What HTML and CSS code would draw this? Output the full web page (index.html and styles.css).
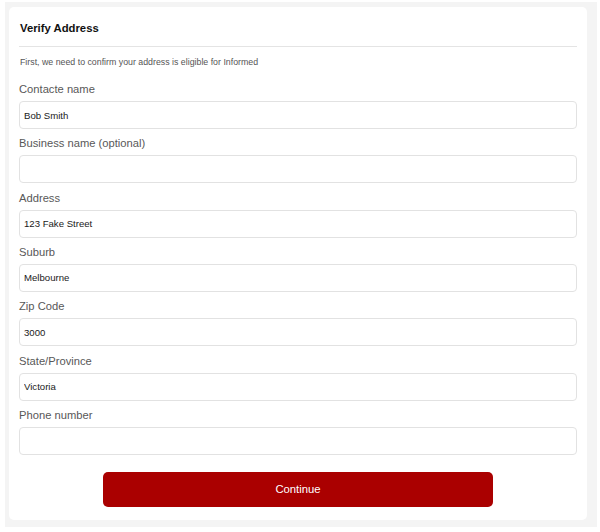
FILE: index.html
```html
<!DOCTYPE html>
<html>
<head>
<meta charset="utf-8">
<link rel="stylesheet" href="styles.css">
</head>
<body>
<div class="page">
  <div class="card">
    <h1 class="title">Verify Address</h1>
    <hr class="divider">
    <p class="intro">First, we need to confirm your address is eligible for Informed</p>
    <div class="field"><label class="label">Contacte name</label><input class="input" type="text" value="Bob Smith"></div>
    <div class="field"><label class="label">Business name (optional)</label><input class="input" type="text" value=""></div>
    <div class="field"><label class="label">Address</label><input class="input" type="text" value="123 Fake Street"></div>
    <div class="field"><label class="label">Suburb</label><input class="input" type="text" value="Melbourne"></div>
    <div class="field"><label class="label">Zip Code</label><input class="input" type="text" value="3000"></div>
    <div class="field"><label class="label">State/Province</label><input class="input" type="text" value="Victoria"></div>
    <div class="field"><label class="label">Phone number</label><input class="input" type="text" value=""></div>
    <div class="actions"><button class="btn" type="button">Continue</button></div>
  </div>
</div>
</body>
</html>
```

FILE: styles.css
```css
html, body {
  margin: 0;
  padding: 0;
  background: #ffffff;
  font-family: "Liberation Sans", Arial, sans-serif;
}
.page {
  margin: 2px 3px 0 5px;
  background: #f4f4f4;
  padding: 5px 10px 7px 4px;
}
.card {
  background: #ffffff;
  border-radius: 5px;
  padding: 11px 10px 13px 10px;
  display: flex;
  flex-direction: column;
}
.title {
  margin: 0 0 0 1px;
  font-size: 11.3px;
  line-height: 20px;
  font-weight: 700;
  color: #111111;
}
.divider {
  margin: 8px 0 0 0;
  border: none;
  border-top: 1px solid #e4e4e4;
  height: 0;
}
.intro {
  margin: 8px 0 0 1px;
  font-size: 8.8px;
  line-height: 14px;
  color: #555555;
}
.field {
  display: flex;
  flex-direction: column;
  margin-top: 11px;
}
.field + .field {
  margin-top: 5.33px;
}
.label {
  font-size: 11.2px;
  line-height: 18px;
  color: #585858;
  margin: 0 0 3px 0;
}
.input {
  box-sizing: border-box;
  height: 28px;
  width: 100%;
  border: 1px solid #e2e2e2;
  border-radius: 4px;
  padding: 0 4px;
  font-family: "Liberation Sans", Arial, sans-serif;
  font-size: 9.6px;
  font-weight: 500;
  color: #1a1a1a;
  background: #ffffff;
  outline: none;
}
.actions {
  display: flex;
  justify-content: center;
  margin-top: 17px;
}
.btn {
  width: 390px;
  height: 35px;
  background: #aa0000;
  color: #ffffff;
  border: none;
  border-radius: 5px;
  font-family: "Liberation Sans", Arial, sans-serif;
  font-size: 11.3px;
}
```
